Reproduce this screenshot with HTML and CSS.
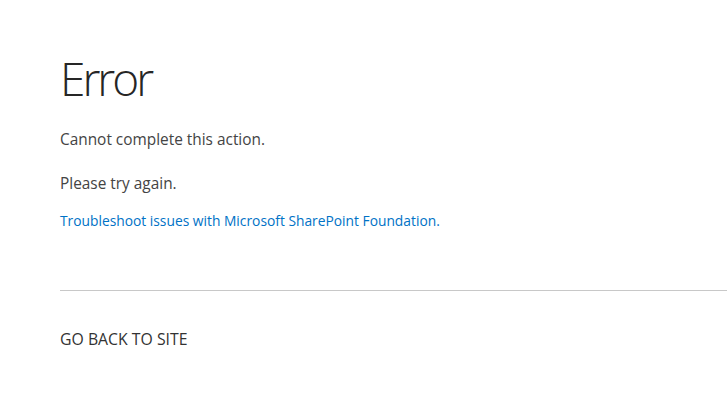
FILE: index.html
```html
<!DOCTYPE html>
<html>
<head>
<meta charset="utf-8">
<link rel="stylesheet" href="styles.css">
</head>
<body>
<div class="page">
  <h1 class="title">Error</h1>
  <p class="msg msg-first">Cannot complete this action.</p>
  <p class="msg msg-second">Please try again.</p>
  <a class="help" href="#">Troubleshoot issues with Microsoft SharePoint Foundation.</a>
  <hr class="rule">
  <a class="back" href="#">GO BACK TO SITE</a>
</div>
</body>
</html>
```
FILE: styles.css
```css
html, body {
  margin: 0;
  padding: 0;
  background: #ffffff;
}
.page {
  padding: 52px 0 0 60px;
  font-family: "Open Sans", "Noto Sans", "Liberation Sans", sans-serif;
  color: #333333;
}
.title {
  margin: 0;
  font-weight: 300;
  font-size: 46px;
  line-height: 52px;
  letter-spacing: -3px;
  color: #262626;
}
.msg {
  margin: 0;
  font-size: 15.4px;
  line-height: 20px;
  color: #444444;
}
.msg-first { margin-top: 26px; }
.msg-second { margin-top: 24px; }
.help {
  display: block;
  margin-top: 17px;
  font-size: 13.8px;
  line-height: 20px;
  color: #0072c6;
  text-decoration: none;
}
.rule {
  margin: 59px 0 0 0;
  border: 0;
  border-top: 1px solid #c8c8c8;
  height: 0;
}
.back {
  display: block;
  margin-top: 38px;
  font-size: 15.8px;
  line-height: 20px;
  color: #333333;
  text-decoration: none;
}
```
